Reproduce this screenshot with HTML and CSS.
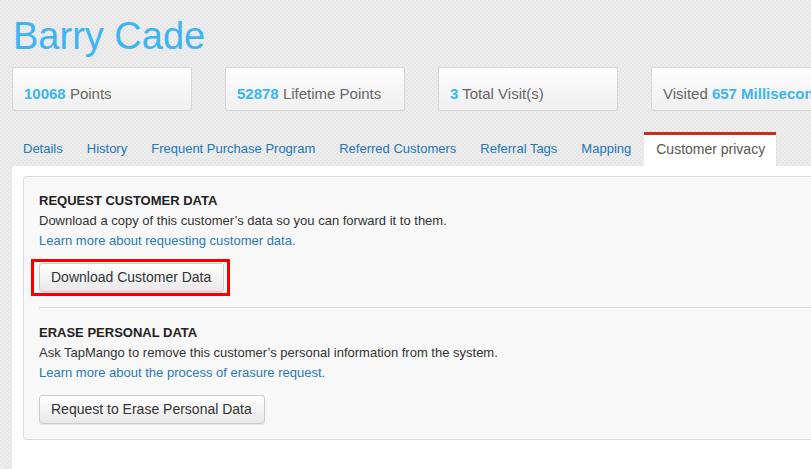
FILE: index.html
```html
<!DOCTYPE html>
<html lang="en">
<head>
<meta charset="utf-8">
<title>Barry Cade</title>
<link rel="stylesheet" href="styles.css">
</head>
<body>
<div class="page">
  <h1 class="name">Barry Cade</h1>
  <div class="stats">
    <div class="stat"><b>10068</b> Points</div>
    <div class="stat"><b>52878</b> Lifetime Points</div>
    <div class="stat"><b>3</b> Total Visit(s)</div>
    <div class="stat stat-wide">Visited <b>657 Milliseconds</b> Ago</div>
  </div>
  <ul class="tabs">
    <li class="tab">Details</li>
    <li class="tab">History</li>
    <li class="tab">Frequent Purchase Program</li>
    <li class="tab">Referred Customers</li>
    <li class="tab">Referral Tags</li>
    <li class="tab">Mapping</li>
    <li class="tab tab-active">Customer privacy</li>
  </ul>
  <div class="content">
    <div class="panel">
      <section class="section">
        <h2 class="section-title">REQUEST CUSTOMER DATA</h2>
        <p class="section-text">Download a copy of this customer’s data so you can forward it to them.</p>
        <a class="section-link" href="#">Learn more about requesting customer data.</a>
        <div class="actions">
          <span class="highlight"><button class="btn">Download Customer Data</button></span>
        </div>
      </section>
      <section class="section section-divided">
        <h2 class="section-title">ERASE PERSONAL DATA</h2>
        <p class="section-text">Ask TapMango to remove this customer’s personal information from the system.</p>
        <a class="section-link" href="#">Learn more about the process of erasure request.</a>
        <div class="actions">
          <button class="btn">Request to Erase Personal Data</button>
        </div>
      </section>
    </div>
  </div>
</div>
</body>
</html>
```
FILE: styles.css
```css
html, body {
  margin: 0;
  padding: 0;
  height: 100%;
  overflow: hidden;
}
body {
  font-family: "Liberation Sans", Arial, sans-serif;
  background-color: #ebebeb;
  background-image: repeating-conic-gradient(#eeeeee 0 25%, #e6e6e6 0 50%);
  background-size: 4px 4px;
}
.page {
  width: 1000px;
  padding-top: 13px;
  display: flex;
  flex-direction: column;
  height: 100%;
  box-sizing: border-box;
}
.name {
  margin: 0 0 0 13px;
  font-size: 38px;
  line-height: 46px;
  font-weight: normal;
  color: #3cb5f2;
}
.stats {
  display: flex;
  gap: 33px;
  margin: 8px 0 0 12px;
}
.stat {
  flex: 0 0 180px;
  box-sizing: border-box;
  height: 44px;
  padding: 17px 11px 8px;
  border: 1px solid #d6d6d6;
  border-radius: 2px;
  background: linear-gradient(#fdfdfd, #efefef);
  font-size: 15px;
  line-height: 17px;
  color: #666;
  white-space: nowrap;
}
.stat-wide {
  flex-basis: 240px;
}
.stat b {
  color: #3cb5f2;
}
.tabs {
  list-style: none;
  display: flex;
  align-items: flex-end;
  margin: 21px 0 0 11px;
  padding: 0;
}
.tab {
  padding: 4px 12px 7px;
  border-top: 3px solid transparent;
  font-size: 13px;
  line-height: 20px;
  color: #2277b5;
  white-space: nowrap;
}
.tab-active {
  margin-left: 1px;
  padding: 4px 11px 7px 12px;
  font-size: 14px;
  color: #555;
  background: #fff;
  border-top-color: #cc2b1e;
  box-shadow: 1px 0 0 #e2e2e2;
}
.content {
  flex: 1;
  margin-left: 12px;
  background: #fff;
  padding: 10px 11px 30px;
}
.panel {
  background: #f8f8f8;
  border: 1px solid #dcdcdc;
  border-radius: 3px;
}
.section {
  margin: 0 15px;
  padding: 14px 0 15px;
}
.section-divided {
  border-top: 1px solid #dddddd;
  padding-top: 15px;
}
.section-title {
  margin: 0;
  font-size: 13px;
  line-height: 20px;
  font-weight: bold;
  color: #222;
}
.section-text {
  margin: 0;
  font-size: 13px;
  line-height: 20px;
  color: #333;
}
.section-link {
  display: block;
  font-size: 13px;
  line-height: 20px;
  color: #2a78b2;
  text-decoration: none;
}
.actions {
  margin-top: 12px;
  display: flex;
}
.highlight {
  display: inline-flex;
  border: 3px solid #f20000;
  padding: 1px 3px 1px 5px;
  margin: -4px 0 -4px -8px;
}
.btn {
  font-family: "Liberation Sans", Arial, sans-serif;
  font-size: 14px;
  line-height: 19px;
  height: 29px;
  padding: 4px 12px 4px 11px;
  color: #333;
  background: linear-gradient(#ffffff, #e8e8e8);
  border: 1px solid #cccccc;
  border-radius: 3px;
  box-shadow: 0 1px 1px rgba(0, 0, 0, 0.08);
}
```
